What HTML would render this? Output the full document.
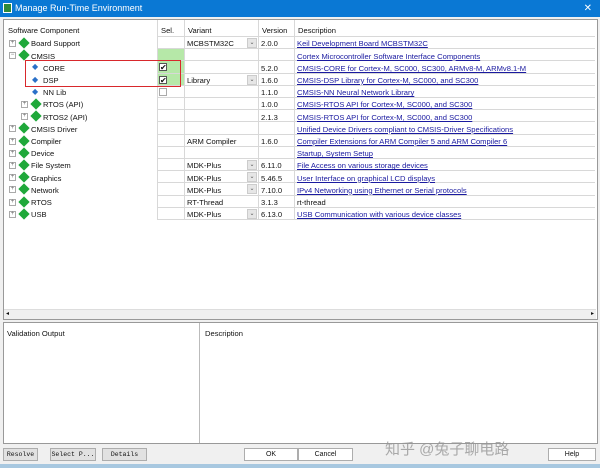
<!DOCTYPE html><html><head><style>
*{margin:0;padding:0;box-sizing:border-box}
body{width:600px;height:468px;background:#f0f0f0;font-family:"Liberation Sans",sans-serif;font-size:7.6px;color:#111;position:relative;overflow:hidden}
.a{position:absolute;white-space:nowrap}
.t{left:0;top:0;width:600px;height:17px;background:#0a78d4;color:#fff;font-size:9px;line-height:17px;padding-left:15px}
.tb{left:3px;top:19px;width:595px;height:301px;background:#fff;border:1px solid #999}
.row{position:absolute;left:157px;width:438px;border-bottom:1px solid #d8d8d8;height:12.2px}
.l{color:#1a1aa0;text-decoration:underline}
.g{display:inline-block;width:8px;height:8px;background:#1fa83a;transform:rotate(45deg);position:absolute}
.p{position:absolute;width:7px;height:7px;border:1px solid #aaa;font-size:6px;line-height:5px;text-align:center;color:#666}
.dd{position:absolute;width:10px;height:10px;background:#e6e6e6;border:1px solid #ccc;font-size:6px;text-align:center;line-height:8px;color:#555}
.cb{position:absolute;width:8px;height:8px;border:1px solid #555;background:#fff;font-size:8px;line-height:7px}
.btn{position:absolute;top:448px;height:13px;background:#e1e1e1;border:1px solid #adadad;font-size:7px;text-align:center;line-height:11px;white-space:nowrap;overflow:hidden}
</style></head><body>
<div class="a t">Manage Run-Time Environment<span style="position:absolute;right:8px;font-size:10px">✕</span></div>
<div style="position:absolute;left:3px;top:3px;width:9px;height:10px;background:#2f8a3a;border:1px solid #fff"></div>
<div class="a tb"></div>
<div class="a" style="left:157px;top:49px;width:27px;height:37px;background:#b6e8a8"></div>
<div id="g"></div>
<div class="a" style="left:4px;top:309px;width:592px;height:10px;background:#f0f0f0;border-top:1px solid #ddd"><span style="position:absolute;left:2px;font-size:6px">◂</span><span style="position:absolute;right:2px;font-size:6px">▸</span></div>
<div class="a" style="left:3px;top:322px;width:595px;height:122px;background:#fff;border:1px solid #999"></div>
<div class="a" style="left:199px;top:323px;width:1px;height:120px;background:#bbb"></div>
<div class="a" style="left:7px;top:329px">Validation Output</div>
<div class="a" style="left:205px;top:329px">Description</div>
<div class="btn" style="left:3px;width:35px;font-family:'Liberation Mono';font-size:6.5px">Resolve</div>
<div class="btn" style="left:50px;width:46px;font-family:'Liberation Mono';font-size:6.5px">Select P...</div>
<div class="btn" style="left:102px;width:45px;font-family:'Liberation Mono';font-size:6.5px">Details</div>
<div class="btn" style="left:244px;width:54px;background:#fff">OK</div>
<div class="btn" style="left:298px;width:55px;background:#fff">Cancel</div>
<div class="btn" style="left:548px;width:48px;background:#fff">Help</div>
<div class="a" style="left:385px;top:438px;font-size:15px;color:rgba(150,150,150,.8);font-family:'Liberation Sans','Noto Sans CJK SC',sans-serif">知乎 @兔子聊电路</div>
<div class="a" style="left:0;top:464px;width:600px;height:4px;background:#a8c8e0"></div>
<div class="a" style="left:25px;top:60px;width:156px;height:27px;border:1.5px solid #d8282c"></div>
<script>
var R=[["Board Support",0,1,"","MCBSTM32C",1,"2.0.0","Keil Development Board MCBSTM32C"],
["CMSIS",0,1,"","",0,"","Cortex Microcontroller Software Interface Components"],
["CORE",1,0,"c","",0,"5.2.0","CMSIS-CORE for Cortex-M, SC000, SC300, ARMv8-M, ARMv8.1-M"],
["DSP",1,0,"c","Library",1,"1.6.0","CMSIS-DSP Library for Cortex-M, SC000, and SC300"],
["NN Lib",1,0,"e","",0,"1.1.0","CMSIS-NN Neural Network Library"],
["RTOS (API)",1,1,"","",0,"1.0.0","CMSIS-RTOS API for Cortex-M, SC000, and SC300"],
["RTOS2 (API)",1,1,"","",0,"2.1.3","CMSIS-RTOS API for Cortex-M, SC000, and SC300"],
["CMSIS Driver",0,1,"","",0,"","Unified Device Drivers compliant to CMSIS-Driver Specifications"],
["Compiler",0,1,"","ARM Compiler",0,"1.6.0","Compiler Extensions for ARM Compiler 5 and ARM Compiler 6"],
["Device",0,1,"","",0,"","Startup, System Setup"],
["File System",0,1,"","MDK-Plus",1,"6.11.0","File Access on various storage devices"],
["Graphics",0,1,"","MDK-Plus",1,"5.46.5","User Interface on graphical LCD displays"],
["Network",0,1,"","MDK-Plus",1,"7.10.0","IPv4 Networking using Ethernet or Serial protocols"],
["RTOS",0,1,"","RT-Thread",0,"3.1.3","rt-thread"],
["USB",0,1,"","MDK-Plus",1,"6.13.0","USB Communication with various device classes"]];
var h='<div class="a" style="left:8px;top:26px">Software Component</div><div class="a" style="left:161px;top:26px">Sel.</div><div class="a" style="left:188px;top:26px">Variant</div><div class="a" style="left:262px;top:26px">Version</div><div class="a" style="left:298px;top:26px">Description</div>';
h+='<div class="a" style="left:157px;top:36px;width:438px;height:1px;background:#d8d8d8"></div>';
[157,184,258,294].forEach(function(x){h+='<div class="a" style="left:'+x+'px;top:20px;width:1px;height:200px;background:#d8d8d8"></div>'});
R.forEach(function(r,i){var y=37+i*12.2,ty=y+2.3,ind=r[1]?12:0;
h+='<div class="row" style="top:'+y+'px"></div>';
if(r[2]){h+='<div class="p" style="left:'+(9+ind)+'px;top:'+(y+3)+'px">'+(i==1?'−':'+')+'</div><div class="g" style="left:'+(20+ind)+'px;top:'+(y+2)+'px"></div>';}
else h+='<div class="a" style="left:32px;top:'+(y+1)+'px;color:#2a70c8;font-size:8px">◆</div>';
h+='<div class="a" style="left:'+(r[1]?43:31)+'px;top:'+ty+'px">'+r[0]+'</div>';
if(r[3]=="c")h+='<div class="cb" style="left:159px;top:'+(y+2)+'px">✔</div>';
if(r[3]=="e")h+='<div class="cb" style="left:159px;top:'+(y+2)+'px;border-color:#aaa"></div>';
if(r[4])h+='<div class="a" style="left:187px;top:'+ty+'px">'+r[4]+'</div>';
if(r[5])h+='<div class="dd" style="left:247px;top:'+(y+1)+'px">⌄</div>';
h+='<div class="a" style="left:261px;top:'+ty+'px">'+r[6]+'</div>';
h+='<div class="a '+(r[7]=="rt-thread"?"":"l")+'" style="left:297px;top:'+ty+'px">'+r[7]+'</div>';});
document.getElementById('g').innerHTML=h;
</script>
</body></html>
